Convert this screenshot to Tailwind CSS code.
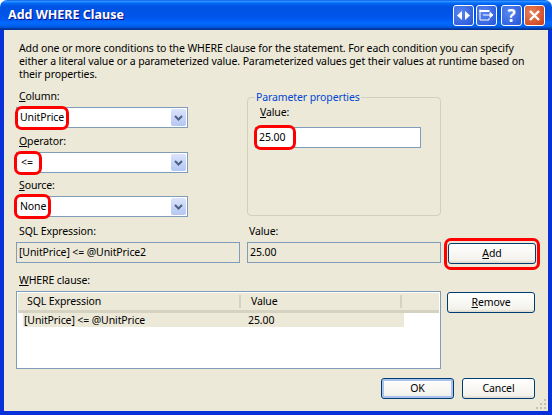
<!DOCTYPE html>
<html>
<head>
<meta charset="utf-8">
<title>Add WHERE Clause</title>
<script src="https://cdn.jsdelivr.net/npm/@tailwindcss/browser@4"></script>
</head>
<body class="bg-white">
<div class="w-[552px] h-[415px] flex flex-col overflow-hidden font-['Noto_Sans',sans-serif] text-[10.5px] leading-[13px] tracking-[-0.11px] text-black">

  <!-- title bar -->
  <div class="h-[30px] shrink-0 rounded-t-[7px] flex items-center pl-[8px] pr-[7px] bg-[linear-gradient(180deg,#0058ee_0%,#3593ff_4%,#288eff_6%,#127dff_8%,#036ffc_10%,#0262ee_14%,#0057e5_20%,#0054e3_24%,#0055eb_56%,#005bf5_66%,#026afe_76%,#0062ef_86%,#0052d6_92%,#0040ab_94%,#003092_100%)]">
    <div class="text-white font-bold text-[12.5px] leading-[16px] tracking-normal [text-shadow:1px_1px_0_#0f1089] mr-auto">Add WHERE Clause</div>
    <div class="w-[21px] h-[21px] rounded-[3px] border border-white bg-[radial-gradient(circle_at_35%_35%,#5a86f0,#2355d8)] flex items-center justify-center mr-[2px]">
      <svg width="13" height="9" viewBox="0 0 13 9"><path d="M5 0v9L0 4.500zM8 0v9l5-4.500z" fill="#fff"/></svg>
    </div>
    <div class="w-[21px] h-[21px] rounded-[3px] border border-white bg-[radial-gradient(circle_at_35%_35%,#5a86f0,#2355d8)] flex items-center justify-center mr-[4px]">
      <svg width="15" height="12" viewBox="0 0 15 12"><path d="M1 1.500h9M1 .5v10.500h9V9" fill="none" stroke="#fff"/><path d="M.5 1h10v2H.5z" fill="#fff"/><path d="M4 6h7M11 3.500v5l3-2.500z" stroke="#fff" fill="#fff"/></svg>
    </div>
    <div class="w-[21px] h-[21px] rounded-[3px] border border-white bg-[radial-gradient(circle_at_35%_35%,#5a86f0,#2355d8)] flex items-center justify-center mr-[2px] text-white font-bold text-[17px] leading-[19px]">?</div>
    <div class="w-[21px] h-[21px] rounded-[3px] border border-white bg-[radial-gradient(circle_at_35%_35%,#e8835f,#c93c14)] flex items-center justify-center">
      <svg width="13" height="13" viewBox="0 0 13 13"><path d="M2 2l9 9M11 2l-9 9" stroke="#fff" stroke-width="2.400" fill="none"/></svg>
    </div>
  </div>

  <!-- window frame and client area -->
  <div class="flex-1 border-x-4 border-b-4 border-[#0831d9] bg-[#ece9d8] px-[12px] pt-[12px] relative">
    <p class="ml-[3px] w-[510px]">Add one or more conditions to the WHERE clause for the statement. For each condition you can specify either a literal value or a parameterized value. Parameterized values get their values at runtime based on their properties.</p>

    <div class="flex mt-[9px]">
      <div class="w-[172px]">
        <div class="pl-[3px]"><u>C</u>olumn:</div>
        <div class="relative mt-[4px] h-[21px] border border-[#7f9db9] bg-white flex items-center justify-between pl-[3px] pr-[1px]">
          <span>UnitPrice</span>
          <span class="w-[15px] h-[17px] rounded-[2px] bg-[linear-gradient(180deg,#dbe4fa,#b4c6f3)] flex items-center justify-center"><svg width="9" height="6" viewBox="0 0 9 6"><path d="M1 1l3.500 3.500L8 1" fill="none" stroke="#4d6185" stroke-width="2"/></svg></span>
          <div class="absolute left-[-2px] top-[-2px] w-[54px] h-[24px] border-[3px] border-[#f00] rounded-[7px]"></div>
        </div>
        <div class="mt-[7px] pl-[3px]"><u>O</u>perator:</div>
        <div class="relative mt-[4px] h-[21px] border border-[#7f9db9] bg-white flex items-center justify-between pl-[4px] pr-[1px]">
          <span>&lt;=</span>
          <span class="w-[15px] h-[17px] rounded-[2px] bg-[linear-gradient(180deg,#dbe4fa,#b4c6f3)] flex items-center justify-center"><svg width="9" height="6" viewBox="0 0 9 6"><path d="M1 1l3.500 3.500L8 1" fill="none" stroke="#4d6185" stroke-width="2"/></svg></span>
          <div class="absolute left-[-3px] top-[-2px] w-[28px] h-[24px] border-[3px] border-[#f00] rounded-[7px]"></div>
        </div>
        <div class="mt-[6px] pl-[3px]"><u>S</u>ource:</div>
        <div class="relative mt-[4px] h-[21px] border border-[#7f9db9] bg-white flex items-center justify-between pl-[3px] pr-[1px]">
          <span>None</span>
          <span class="w-[15px] h-[17px] rounded-[2px] bg-[linear-gradient(180deg,#dbe4fa,#b4c6f3)] flex items-center justify-center"><svg width="9" height="6" viewBox="0 0 9 6"><path d="M1 1l3.500 3.500L8 1" fill="none" stroke="#4d6185" stroke-width="2"/></svg></span>
          <div class="absolute left-[-3px] top-[-3px] w-[37px] h-[25px] border-[3px] border-[#f00] rounded-[7px]"></div>
        </div>
      </div>

      <div class="relative ml-[59px] mt-[7px] w-[194px] h-[119px] border border-[#d0d0bf] rounded-[4px] pl-[12px] pt-[8px]">
        <div class="absolute left-[7px] top-[-7px] bg-[#ece9d8] px-[1px] text-[#0046d5]">Parameter properties</div>
        <div><u>V</u>alue:</div>
        <div class="relative mt-[8px] ml-[-5px] w-[166px] h-[21px] border border-[#7f9db9] bg-white flex items-center pl-[3px]">
          <span>25.00</span>
          <div class="absolute left-[-2px] top-[-3px] w-[42px] h-[25px] border-[3px] border-[#f00] rounded-[7px]"></div>
        </div>
      </div>
    </div>

    <div class="flex mt-[8px]">
      <div class="w-[224px]">
        <div class="pl-[3px]">SQL Expression:</div>
        <div class="mt-[4px] h-[21px] border border-[#7f9db9] flex items-center pl-[2px]">[UnitPrice] &lt;= @UnitPrice2</div>
      </div>
      <div class="ml-[7px] w-[194px]">
        <div class="pl-[2px]">Value:</div>
        <div class="mt-[4px] h-[21px] border border-[#7f9db9] flex items-center pl-[2px]">25.00</div>
      </div>
      <div class="relative ml-[7px] mt-[18px] w-[88px] h-[21px] border border-[#003c74] rounded-[3px] bg-[linear-gradient(180deg,#fff,#f3f2ec_85%,#dcd8ca)] flex items-center justify-center">
        <span><u>A</u>dd</span>
        <div class="absolute left-[-5px] top-[-6px] w-[96px] h-[32px] border-[3px] border-[#f00] rounded-[7px]"></div>
      </div>
    </div>

    <div class="mt-[10px] pl-[3px]"><u>W</u>HERE clause:</div>
    <div class="flex mt-[4px]">
      <div class="w-[425px] h-[78px] border border-[#7f9db9] bg-white p-[1px]">
        <div class="h-[20px] flex items-center bg-[#ece9d8] border-b-[3px] border-[#d6d2c2]">
          <div class="w-[223px] pl-[9px] h-[13px] border-r-2 border-[#d6d2c2] flex items-center">SQL Expression</div>
          <div class="w-[161px] pl-[10px] h-[13px] border-r-2 border-[#d6d2c2] flex items-center">Value</div>
        </div>
        <div class="ml-[5px] w-[381px] h-[14px] bg-[#ece9d8] flex items-center">
          <div class="w-[225px] pl-[1px]">[UnitPrice] &lt;= @UnitPrice</div>
          <div>25.00</div>
        </div>
      </div>
      <div class="ml-[6px] mt-[1px] w-[88px] h-[21px] border border-[#003c74] rounded-[3px] bg-[linear-gradient(180deg,#fff,#f3f2ec_85%,#dcd8ca)] flex items-center justify-center"><span><u>R</u>emove</span></div>
    </div>

    <div class="flex justify-end mt-[9px] pr-[1px]">
      <div class="w-[73px] h-[21px] border border-[#003c74] rounded-[3px] bg-[linear-gradient(180deg,#fff,#f3f2ec_85%,#dcd8ca)] shadow-[inset_0_0_0_2px_#a9c3ee] flex items-center justify-center">OK</div>
      <div class="ml-[8px] w-[73px] h-[21px] border border-[#003c74] rounded-[3px] bg-[linear-gradient(180deg,#fff,#f3f2ec_85%,#dcd8ca)] flex items-center justify-center">Cancel</div>
    </div>

    <svg class="absolute right-[1px] bottom-[1px]" width="11" height="11" viewBox="0 0 11 11"><path d="M8 0h2v2H8zM4 4h2v2H4zM8 4h2v2H8zM0 8h2v2H0zM4 8h2v2H4zM8 8h2v2H8z" fill="#c5c2b2"/></svg>
  </div>
</div>
</body>
</html>
